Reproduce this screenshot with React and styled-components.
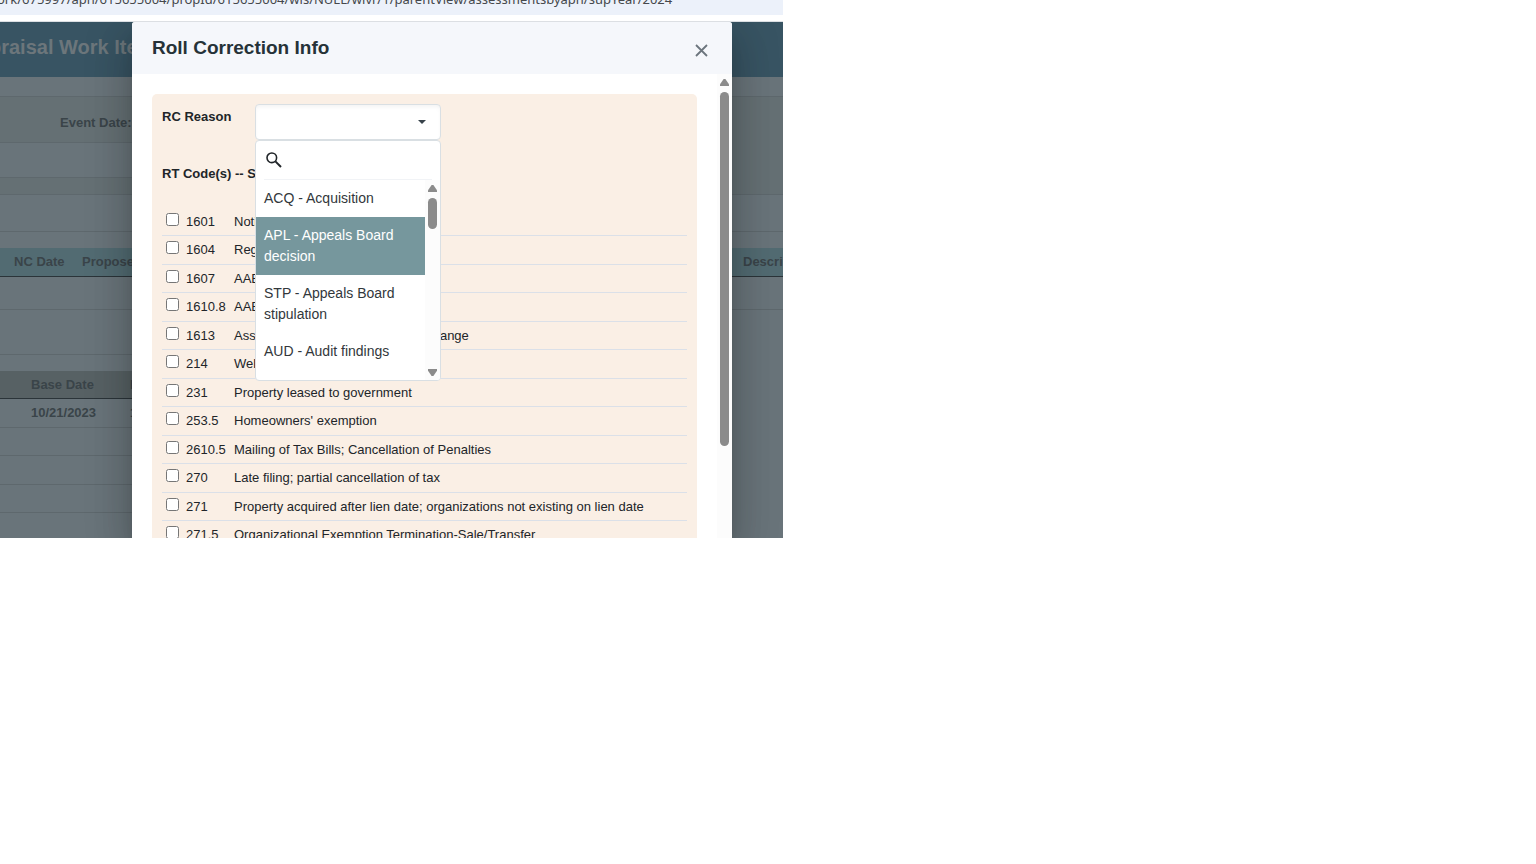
import React, { useState } from 'react';
import styled, { createGlobalStyle } from 'styled-components';

const GlobalStyle = createGlobalStyle`
  * {
    box-sizing: border-box;
  }

  body {
    margin: 0;
    background: #fff;
    font-family: "Liberation Sans", Arial, sans-serif;
    font-size: 13px;
    line-height: 1.5;
    color: #212529;
  }
`;

const rtCodes = [
  { code: '1601', label: 'Notice of assessment' },
  { code: '1604', label: 'Regular equalization period' },
  { code: '1607', label: 'AAB hearing decision' },
  { code: '1610.8', label: 'AAB full value finding' },
  { code: '1613', label: 'Assessment roll corrections for a change' },
  { code: '214', label: 'Welfare exemption' },
  { code: '231', label: 'Property leased to government' },
  { code: '253.5', label: "Homeowners' exemption" },
  { code: '2610.5', label: 'Mailing of Tax Bills; Cancellation of Penalties' },
  { code: '270', label: 'Late filing; partial cancellation of tax' },
  { code: '271', label: 'Property acquired after lien date; organizations not existing on lien date' },
  { code: '271.5', label: 'Organizational Exemption Termination-Sale/Transfer' },
];

const reasons = [
  { code: 'ACQ', label: 'Acquisition' },
  { code: 'APL', label: 'Appeals Board decision' },
  { code: 'STP', label: 'Appeals Board stipulation' },
  { code: 'AUD', label: 'Audit findings' },
];

const WorkItemPage = () => (
  <Page>
    <AppHeader>praisal Work Items</AppHeader>
    <Band $height={20} />
    <EventSection>
      <LeftColumn>
        <Band $height={46}>
          <EventLabel>Event Date:</EventLabel>
        </Band>
        <Band $height={35} $tone="#69747a" />
        <Band $height={16} $plain />
      </LeftColumn>
    </EventSection>
    <Band $height={37} />
    <Band $height={16} $plain />
    <ColumnHeads $tone="#526b72" $height={29}>
      <Col $width={68}>NC Date</Col>
      <Col $width={661}>Proposed</Col>
      <Col $width={80}>Description</Col>
    </ColumnHeads>
    <Band $height={33} />
    <LeftColumn>
      <Band $height={45} />
      <Band $height={16} $plain />
      <ColumnHeads $tone="#576164" $height={28} $indent={31}>
        <Col $width={99}>Base Date</Col>
        <Col $width={100}>Base Value</Col>
      </ColumnHeads>
      <Band $height={29} $indent={31}>
        <Col $width={99}>10/21/2023</Col>
        <Col $width={100}>1,250,000</Col>
      </Band>
      <Band $height={28} />
      <Band $height={29} />
      <Band $height={28} />
      <Band $height={29} />
    </LeftColumn>
  </Page>
);

const ReasonPicker = () => {
  const [selected, setSelected] = useState('APL');

  return (
    <Picker>
      <PickerButton type="button" id="rc-reason" aria-haspopup="listbox" aria-expanded="true">
        <Caret />
      </PickerButton>
      <Menu>
        <SearchRow>
          <svg width="16" height="16" viewBox="0 0 16 16" fill="none" stroke="#212529" aria-hidden="true">
            <circle cx="5.8" cy="5.8" r="4.8" strokeWidth="1.6" />
            <path d="M9.4 9.4 L15 15" strokeWidth="2" />
          </svg>
          <SearchInput type="text" aria-label="Search reasons" />
        </SearchRow>
        <MenuBody>
          <Options role="listbox" aria-label="RC Reason">
            {reasons.map(({ code, label }) => (
              <Option
                key={code}
                role="option"
                aria-selected={code === selected}
                $active={code === selected}
                onClick={() => setSelected(code)}
              >
                {code} - {label}
              </Option>
            ))}
          </Options>
          <Scrollbar>
            <Arrow />
            <Thumb $height={31} />
            <Spacer />
            <Arrow $down />
          </Scrollbar>
        </MenuBody>
      </Menu>
    </Picker>
  );
};

const App = () => {
  return (
    <>
      <GlobalStyle />
      <Viewport>
        <AddressBar>
          <Url>ork/675997/apn/615655004/propId/615655004/wis/NULL/wivr/1/parentView/assessmentsbyapn/supYear/2024</Url>
        </AddressBar>
        <Stage>
          <WorkItemPage />
          <Modal role="dialog" aria-labelledby="modal-title">
            <ModalHeader>
              <ModalTitle id="modal-title">Roll Correction Info</ModalTitle>
              <CloseButton type="button" aria-label="Close">
                <svg width="13" height="13" viewBox="0 0 13 13" stroke="#6c757d" strokeWidth="1.8" aria-hidden="true">
                  <path d="M1 1 L12 12 M12 1 L1 12" />
                </svg>
              </CloseButton>
            </ModalHeader>
            <ModalBody>
              <ModalContent>
                <Panel>
                  <Field>
                    <FieldLabel htmlFor="rc-reason">RC Reason</FieldLabel>
                    <ReasonPicker />
                  </Field>
                  <SectionLabel>RT Code(s) -- Select all that apply</SectionLabel>
                  <CodeTable>
                    <tbody>
                      {rtCodes.map(({ code, label }) => (
                        <tr key={code}>
                          <CheckCell>
                            <input type="checkbox" id={`rt-${code}`} />
                          </CheckCell>
                          <CodeCell>
                            <label htmlFor={`rt-${code}`}>{code}</label>
                          </CodeCell>
                          <td>{label}</td>
                        </tr>
                      ))}
                    </tbody>
                  </CodeTable>
                </Panel>
              </ModalContent>
              <Scrollbar>
                <Arrow />
                <Thumb $height={354} />
              </Scrollbar>
            </ModalBody>
          </Modal>
        </Stage>
      </Viewport>
    </>
  );
};

export default App;

const Viewport = styled.div`
  display: flex;
  flex-direction: column;
  width: 51%;
  height: 62.3vh;
  overflow: hidden;
`;

const AddressBar = styled.div`
  display: flex;
  align-items: flex-end;
  flex: none;
  height: 15px;
  padding-bottom: 7px;
  overflow: hidden;
  background: #ecf1fa;
`;

const Url = styled.span`
  color: #45484c;
  font-family: "Noto Sans", "Open Sans", sans-serif;
  font-size: 13px;
  line-height: 18px;
  text-indent: -3px;
  white-space: nowrap;
`;

const Stage = styled.div`
  position: relative;
  flex: 1;
  min-height: 0;
  margin-top: 6px;
  border-top: 1px solid #dcdfe3;
  overflow: hidden;
`;

const Page = styled.div`
  min-height: 100%;
  overflow: hidden;
  background: #69747a;
  color: #3a4449;
  font-weight: bold;
  white-space: nowrap;
`;

const AppHeader = styled.div`
  height: 55px;
  background: #385463;
  color: #6c767b;
  font-size: 20px;
  line-height: 50px;
  text-indent: -11px;
`;

const Band = styled.div`
  display: flex;
  align-items: center;
  height: ${({ $height }) => $height}px;
  padding-left: ${({ $indent }) => $indent || 0}px;
  border-bottom: ${({ $plain }) => ($plain ? '0' : '1px solid #5e686d')};
  background: ${({ $tone }) => $tone || 'transparent'};
`;

const ColumnHeads = styled(Band)`
  padding-left: ${({ $indent }) => $indent || 14}px;
  border-bottom-color: #2b3439;
`;

const Col = styled.span`
  flex: none;
  width: ${({ $width }) => $width}px;
`;

const EventSection = styled.div`
  border-bottom: 1px solid #5e686d;
  background: #657074;
`;

const LeftColumn = styled.div`
  width: 80%;
`;

const EventLabel = styled.span`
  padding: 6px 0 0 60px;
`;

const Modal = styled.div`
  position: absolute;
  top: 0;
  bottom: 0;
  left: 132px;
  display: flex;
  flex-direction: column;
  width: 600px;
  border-radius: 3px 3px 0 0;
  background: #fff;
  box-shadow: 0 11px 15px -7px rgba(0, 0, 0, 0.2), 0 24px 38px 3px rgba(0, 0, 0, 0.14),
    0 9px 46px 8px rgba(0, 0, 0, 0.12);
`;

const ModalHeader = styled.div`
  display: flex;
  align-items: center;
  justify-content: space-between;
  flex: none;
  height: 52px;
  padding: 0 24px 0 20px;
  border-radius: 3px 3px 0 0;
  background: #f5f7fb;
`;

const ModalTitle = styled.h2`
  margin: 0;
  color: #263238;
  font-size: 19px;
  line-height: 26px;
`;

const CloseButton = styled.button`
  display: flex;
  padding: 4px 0 0;
  border: 0;
  background: none;
  cursor: pointer;
`;

const ModalBody = styled.div`
  display: flex;
  flex: 1;
  min-height: 0;
`;

const ModalContent = styled.div`
  flex: 1;
  min-width: 0;
  padding: 20px;
  overflow: hidden;
`;

const Panel = styled.div`
  padding: 10px;
  border-radius: 5px;
  background: #faefe5;
`;

const Field = styled.div`
  display: flex;
`;

const FieldLabel = styled.label`
  width: 93px;
  padding-top: 3px;
  font-weight: bold;
`;

const SectionLabel = styled.div`
  margin: 24px 0;
  font-weight: bold;
`;

const Picker = styled.div`
  position: relative;
  width: 186px;
`;

const PickerButton = styled.button`
  display: flex;
  align-items: center;
  justify-content: flex-end;
  width: 100%;
  height: 36px;
  padding: 0 14px;
  border: 1px solid #d9dfe3;
  border-radius: 4px;
  background: #fff;
  box-shadow: inset 0 3px 4px -1px rgba(0, 0, 0, 0.05);
`;

const Caret = styled.span`
  border: 4px solid transparent;
  border-top-color: #37424a;
  border-bottom: 0;
`;

const Menu = styled.div`
  position: absolute;
  top: 100%;
  left: 0;
  z-index: 1;
  width: 100%;
  border: 1px solid #d9dfe3;
  border-radius: 4px;
  background: #fff;
  overflow: hidden;
`;

const SearchRow = styled.div`
  display: flex;
  align-items: center;
  height: 39px;
  margin: 0 8px;
  padding: 0 2px;
  border-bottom: 1px solid #f1f3f6;
`;

const SearchInput = styled.input`
  flex: 1;
  min-width: 0;
  border: 0;
  outline: 0;
  font: inherit;
`;

const MenuBody = styled.div`
  display: flex;
  height: 200px;
`;

const Options = styled.ul`
  flex: 1;
  margin: 0;
  padding: 0;
  list-style: none;
`;

const Option = styled.li`
  padding: 8px;
  background: ${({ $active }) => ($active ? '#76979d' : 'transparent')};
  color: ${({ $active }) => ($active ? '#fff' : '#32373b')};
  font-size: 14px;
  line-height: 21px;
  cursor: pointer;
`;

const Scrollbar = styled.div`
  display: flex;
  flex-direction: column;
  align-items: center;
  flex: none;
  gap: 6px;
  width: 15px;
  padding: 5px 0 4px;
  background: #fcfcfc;
`;

const Arrow = styled.span`
  width: 9px;
  height: 7px;
  background: #8b8b8b;
  clip-path: polygon(40% 0, 60% 0, 100% 75%, 100% 100%, 0 100%, 0 75%);
  transform: ${({ $down }) => ($down ? 'rotate(180deg)' : 'none')};
`;

const Thumb = styled.span`
  width: 9px;
  height: ${({ $height }) => $height}px;
  border-radius: 5px;
  background: #8b8b8b;
`;

const Spacer = styled.span`
  flex: 1;
`;

const CodeTable = styled.table`
  width: 100%;
  border-collapse: collapse;

  td {
    padding: 4px;
    border-bottom: 1px solid #dbe0e8;
    white-space: nowrap;
  }

  td:first-child {
    padding-right: 3px;
    vertical-align: top;
  }
`;

const CheckCell = styled.td`
  width: 20px;

  input {
    display: block;
    width: 13px;
    height: 13px;
    margin: 1px 0 0;
  }
`;

const CodeCell = styled.td`
  width: 48px;
`;
